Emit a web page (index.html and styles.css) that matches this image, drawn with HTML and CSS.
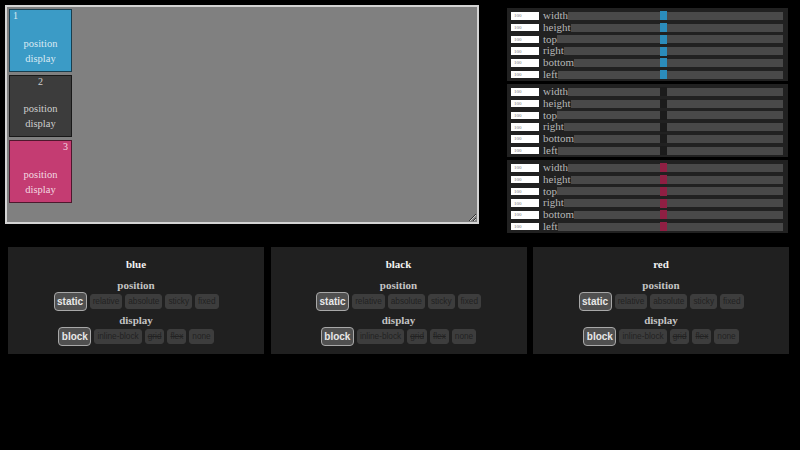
FILE: index.html
```html
<!DOCTYPE html>
<html>
<head>
<meta charset="utf-8">
<link rel="stylesheet" href="styles.css">
</head>
<body>
<div class="top">
  <div class="stage">
    <div class="box blue"><div class="num left">1</div><div class="txt">position<br>display</div></div>
    <div class="box black"><div class="num center">2</div><div class="txt">position<br>display</div></div>
    <div class="box red"><div class="num right">3</div><div class="txt">position<br>display</div></div>
  </div>
  <div class="panel">
    <div class="group g-blue">
      <div class="row"><input class="val" value="100"><div class="slider"><div class="track"><span class="thumb"></span></div><span class="lbl">width</span></div></div>
      <div class="row"><input class="val" value="100"><div class="slider"><div class="track"><span class="thumb"></span></div><span class="lbl">height</span></div></div>
      <div class="row"><input class="val" value="100"><div class="slider"><div class="track"><span class="thumb"></span></div><span class="lbl">top</span></div></div>
      <div class="row"><input class="val" value="100"><div class="slider"><div class="track"><span class="thumb"></span></div><span class="lbl">right</span></div></div>
      <div class="row"><input class="val" value="100"><div class="slider"><div class="track"><span class="thumb"></span></div><span class="lbl">bottom</span></div></div>
      <div class="row"><input class="val" value="100"><div class="slider"><div class="track"><span class="thumb"></span></div><span class="lbl">left</span></div></div>
    </div>
    <div class="group g-black">
      <div class="row"><input class="val" value="100"><div class="slider"><div class="track"><span class="thumb"></span></div><span class="lbl">width</span></div></div>
      <div class="row"><input class="val" value="100"><div class="slider"><div class="track"><span class="thumb"></span></div><span class="lbl">height</span></div></div>
      <div class="row"><input class="val" value="100"><div class="slider"><div class="track"><span class="thumb"></span></div><span class="lbl">top</span></div></div>
      <div class="row"><input class="val" value="100"><div class="slider"><div class="track"><span class="thumb"></span></div><span class="lbl">right</span></div></div>
      <div class="row"><input class="val" value="100"><div class="slider"><div class="track"><span class="thumb"></span></div><span class="lbl">bottom</span></div></div>
      <div class="row"><input class="val" value="100"><div class="slider"><div class="track"><span class="thumb"></span></div><span class="lbl">left</span></div></div>
    </div>
    <div class="group g-red">
      <div class="row"><input class="val" value="100"><div class="slider"><div class="track"><span class="thumb"></span></div><span class="lbl">width</span></div></div>
      <div class="row"><input class="val" value="100"><div class="slider"><div class="track"><span class="thumb"></span></div><span class="lbl">height</span></div></div>
      <div class="row"><input class="val" value="100"><div class="slider"><div class="track"><span class="thumb"></span></div><span class="lbl">top</span></div></div>
      <div class="row"><input class="val" value="100"><div class="slider"><div class="track"><span class="thumb"></span></div><span class="lbl">right</span></div></div>
      <div class="row"><input class="val" value="100"><div class="slider"><div class="track"><span class="thumb"></span></div><span class="lbl">bottom</span></div></div>
      <div class="row"><input class="val" value="100"><div class="slider"><div class="track"><span class="thumb"></span></div><span class="lbl">left</span></div></div>
    </div>
  </div>
</div>
<div class="cards">
  <div class="card">
    <div class="title">blue</div>
    <div class="label">position</div>
    <div class="btns"><span class="btn on">static</span><span class="btn">relative</span><span class="btn">absolute</span><span class="btn">sticky</span><span class="btn">fixed</span></div>
    <div class="label sp">display</div>
    <div class="btns"><span class="btn on">block</span><span class="btn">inline-block</span><span class="btn strike">grid</span><span class="btn strike">flex</span><span class="btn">none</span></div>
  </div>
  <div class="card">
    <div class="title">black</div>
    <div class="label">position</div>
    <div class="btns"><span class="btn on">static</span><span class="btn">relative</span><span class="btn">absolute</span><span class="btn">sticky</span><span class="btn">fixed</span></div>
    <div class="label sp">display</div>
    <div class="btns"><span class="btn on">block</span><span class="btn">inline-block</span><span class="btn strike">grid</span><span class="btn strike">flex</span><span class="btn">none</span></div>
  </div>
  <div class="card">
    <div class="title">red</div>
    <div class="label">position</div>
    <div class="btns"><span class="btn on">static</span><span class="btn">relative</span><span class="btn">absolute</span><span class="btn">sticky</span><span class="btn">fixed</span></div>
    <div class="label sp">display</div>
    <div class="btns"><span class="btn on">block</span><span class="btn">inline-block</span><span class="btn strike">grid</span><span class="btn strike">flex</span><span class="btn">none</span></div>
  </div>
</div>
</body>
</html>
```
FILE: styles.css
```css
html, body {
  margin: 0;
  background: #000;
  font-family: "Liberation Serif", "Times New Roman", serif;
}

.top {
  display: flex;
  align-items: flex-start;
  padding: 5px 0 0 5px;
}

.stage {
  box-sizing: border-box;
  width: 474px;
  height: 219px;
  border: 2px solid #d4d4d4;
  padding: 2px;
  background: #808080;
  resize: both;
  overflow: auto;
  flex: none;
}

.box {
  box-sizing: border-box;
  width: 63px;
  height: 62.5px;
  margin-bottom: 3px;
  border: 1px solid rgba(0, 0, 0, 0.6);
  font-size: 10.5px;
  color: rgba(255, 255, 255, 0.82);
}
.box.blue { background: #3b9bc6; }
.box.black { background: #3c3c3c; color: #cfcfcf; }
.box.red { background: #c43c72; }

.num {
  font-size: 10px;
  line-height: 12px;
  padding: 0 3px;
}
.num.left { text-align: left; }
.num.center { text-align: center; }
.num.right { text-align: right; }

.txt {
  margin-top: 13.5px;
  line-height: 15px;
  text-align: center;
}

.panel {
  margin: 3px 0 0 28px;
  width: 281px;
  display: flex;
  flex-direction: column;
  gap: 3px;
}

.group {
  background: #212121;
  padding: 2px 5px 0.5px 4px;
}

.row {
  display: flex;
  align-items: center;
  height: 11.75px;
  gap: 4px;
}

.val {
  box-sizing: border-box;
  width: 28px;
  height: 7.5px;
  border: none;
  padding: 0 0 0 3px;
  margin: 0;
  background: #fff;
  color: #777;
  font-family: "Liberation Serif", serif;
  font-size: 5px;
  line-height: 7.5px;
  flex: none;
  outline: none;
}

.slider {
  flex: 1;
  display: grid;
  height: 100%;
}
.slider > * {
  grid-area: 1 / 1;
}

.track {
  align-self: center;
  height: 8px;
  background: #494949;
  display: flex;
  justify-content: center;
  align-items: center;
}

.thumb {
  width: 7px;
  height: 9px;
  flex: none;
}
.g-blue .thumb { background: #2b8cbb; }
.g-black .thumb { background: #1b1b1b; }
.g-red .thumb { background: #8f1f43; }

.lbl {
  justify-self: start;
  align-self: center;
  background: #212121;
  color: #b8b8b8;
  font-size: 11px;
  line-height: 11.75px;
  position: relative;
}

.cards {
  display: grid;
  grid-template-columns: 256px 256px 256px;
  column-gap: 6.5px;
  margin: 14px 0 0 8px;
}

.card {
  background: #202020;
  padding: 10px 0 8px;
  text-align: center;
}

.title {
  color: #f2f2f2;
  font-weight: bold;
  font-size: 11px;
  line-height: 14px;
  margin-bottom: 8px;
}

.label {
  color: #c4c4c4;
  font-weight: bold;
  font-size: 11px;
  line-height: 13px;
}
.label.sp { margin-top: 3px; }

.btns {
  display: flex;
  justify-content: center;
  align-items: center;
  gap: 3px;
  height: 19px;
}

.btn {
  font-family: "Liberation Sans", Arial, sans-serif;
  font-size: 8.25px;
  line-height: 9px;
  padding: 2px 2px;
  border: 1px solid #3d3d3d;
  border-radius: 3px;
  background: #3d3d3d;
  color: #222;
}
.btn.strike { text-decoration: line-through; }
.btn.on {
  font-size: 10px;
  font-weight: bold;
  line-height: 11px;
  padding: 3px 2.5px;
  border-color: #a8a8a8;
  background: #505050;
  color: #e8e8e8;
  border-radius: 4px;
}
```
